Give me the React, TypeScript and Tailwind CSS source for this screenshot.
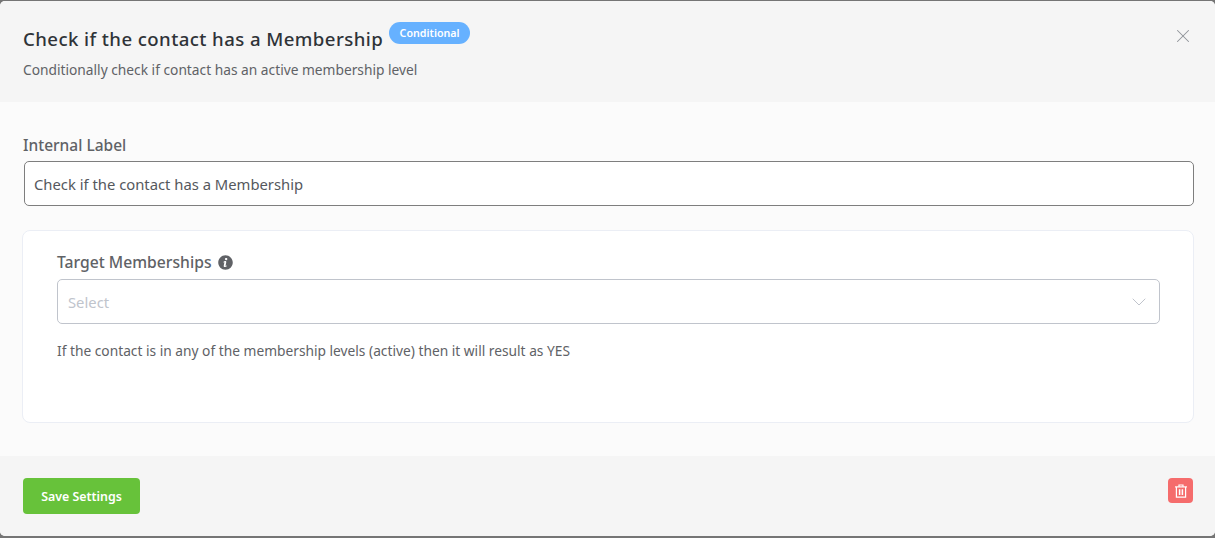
import { ChevronDown, X } from "lucide-react";

function InfoIcon() {
  return (
    <svg width="15" height="15" viewBox="0 0 512 512" fill="#606266" className="ml-[6px]">
      <path d="M256 8C119 8 8 119 8 256s111 248 248 248 248-111 248-248S393 8 256 8zm22 92c24 0 42 16 42 38s-20 42-44 42-40-18-40-40 18-40 42-40zm28 278c-20 22-48 34-72 34-26 0-44-16-38-48l20-106c2-10-2-14-8-14-8 0-18 6-26 14l-8-14c22-22 50-36 74-36 26 0 38 18 32 48l-20 104c-2 10 2 14 8 14 6 0 16-4 28-14z" />
    </svg>
  );
}

function TrashIcon() {
  return (
    <svg width="14" height="14" viewBox="0 0 14 14" fill="none" stroke="white" strokeWidth="1.2">
      <path d="M1 2.9h12" />
      <path d="M5 2.8V1h4v1.8" />
      <path d="M2.4 3v10.2h9.2V3" />
      <path d="M5.6 5.2v5.8M8.4 5.2v5.8" strokeWidth="1.5" />
    </svg>
  );
}

export default function App() {
  return (
    <div className="h-[538px] w-[1215px] overflow-hidden bg-[#757575] pt-px pb-[2px] font-['Noto_Sans',sans-serif] text-[#606266]">
      <div className="flex h-[535px] flex-col overflow-hidden rounded-[5px] bg-[#fbfbfb]">
        {/* Header */}
        <div className="flex h-[101px] items-start justify-between bg-[#f5f5f5] pt-[22px] pr-[21px] pl-[23px]">
          <div>
            <div className="flex items-start">
              <h1 className="text-[18.6px] leading-[32px] font-medium tracking-[0.42px] text-[#2f3338]">
                Check if the contact has a Membership
              </h1>
              <span className="-mt-px ml-[6px] flex h-[22px] w-[81px] items-center justify-center rounded-full bg-[#66b1ff] text-[10.7px] font-semibold text-white">
                Conditional
              </span>
            </div>
            <p className="mt-[5px] text-[13.75px] leading-[20px] text-[#606266]">
              Conditionally check if contact has an active membership level
            </p>
          </div>
          <X size={22} strokeWidth={1.1} className="mt-[2px] text-[#909399]" />
        </div>

        {/* Body */}
        <div className="flex h-[354px] flex-col pt-[32px] pr-[21px] pl-[22px]">
          <label className="pl-px text-[15.5px] leading-[22px] font-medium text-[#606266]">
            Internal Label
          </label>
          <div className="mt-[5px] ml-[2px] flex h-[45px] items-center rounded-[5px] border border-[#7e7e7e] bg-white pt-px pl-[9px] text-[14.8px] text-[#55585d]">
            Check if the contact has a Membership
          </div>

          <div className="mt-[24px] flex h-[193px] flex-col rounded-[8px] border border-[#ebeef5] bg-white pt-[20px] pr-[33px] pl-[34px]">
            <div className="flex h-[22px] items-center pt-px text-[15.7px] font-medium text-[#606266]">
              Target Memberships
              <InfoIcon />
            </div>
            <div className="mt-[6px] flex h-[45px] items-center justify-between rounded-[5px] border border-[#c0c4cc] bg-white pr-[8px] pl-[10px] text-[14.8px] text-[#c0c4cc]">
              <span className="pt-px">Select</span>
              <ChevronDown size={24} strokeWidth={1} className="text-[#c0c4cc]" />
            </div>
            <p className="mt-[17px] text-[13.75px] leading-[20px] text-[#606266]">
              If the contact is in any of the membership levels (active) then it will result as YES
            </p>
          </div>
        </div>

        {/* Footer */}
        <div className="flex flex-1 items-start justify-between bg-[#f5f5f5] pt-[22px] pr-[22px] pl-[23px]">
          <button className="h-[36px] w-[117px] rounded-[4px] bg-[#67c23a] pt-[2px] text-[12.4px] font-semibold text-white">
            Save Settings
          </button>
          <button className="flex h-[25px] w-[25px] items-center justify-center rounded-[4px] bg-[#f56c6c]">
            <TrashIcon />
          </button>
        </div>
      </div>
    </div>
  );
}
